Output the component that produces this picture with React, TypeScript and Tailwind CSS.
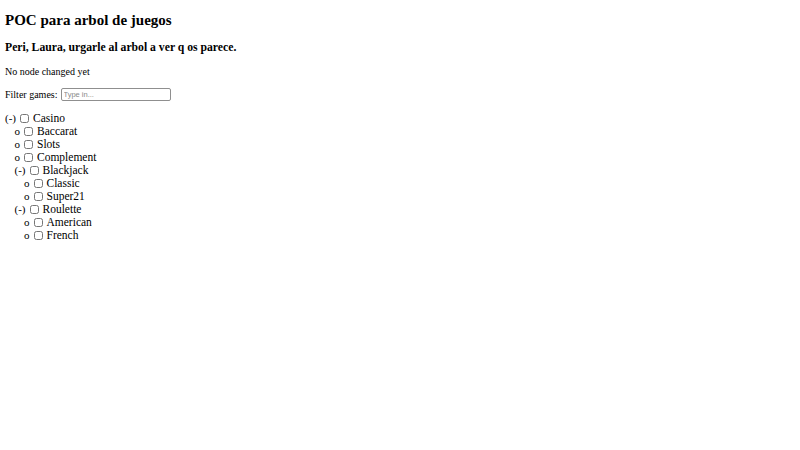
import React from "react";

type Node = { label: string; children?: Node[] };

const tree: Node = {
  label: "Casino",
  children: [
    { label: "Baccarat" },
    { label: "Slots" },
    { label: "Complement" },
    { label: "Blackjack", children: [{ label: "Classic" }, { label: "Super21" }] },
    { label: "Roulette", children: [{ label: "American" }, { label: "French" }] },
  ],
};

function Row({ node, depth }: { node: Node; depth: number }) {
  const hasKids = !!node.children;
  return (
    <>
      <div className="flex items-center h-[13px]" style={{ paddingLeft: depth * 9.5 }}>
        <span className="text-[11px] mr-[4px]">{hasKids ? "(-)" : "o"}</span>
        <input type="checkbox" className="w-[9px] h-[9px] m-0 mr-[4px] -mt-[1px]" />
        <span className="text-[11.5px]">{node.label}</span>
      </div>
      {node.children?.map((c) => (
        <Row key={c.label} node={c} depth={depth + 1} />
      ))}
    </>
  );
}

export default function App() {
  return (
    <div className="px-[5px] text-black bg-white min-h-[450px]" style={{ fontFamily: '"Liberation Serif", serif' }}>
      <h1 className="text-[15px] font-bold pt-[11px] leading-[18px]">POC para arbol de juegos</h1>
      <h2 className="text-[11.7px] font-bold mt-[12px] leading-[14px]">Peri, Laura, urgarle al arbol a ver q os parece.</h2>
      <p className="text-[10px] mt-[11px] leading-[12px]">No node changed yet</p>
      <div className="mt-[10px] flex items-center h-[13px] text-[10px] leading-[12px]">
        <span>Filter games:</span>
        <input
          type="text"
          placeholder="Type in..."
          className="ml-[3px] w-[110px] h-[13px] border border-[#8f8f8f] rounded-[2px] px-[2px] text-[7.5px] placeholder:text-[#8a8a8a]"
          style={{ fontFamily: '"Liberation Sans", sans-serif' }}
        />
      </div>
      <div className="mt-[11px]">
        <Row node={tree} depth={0} />
      </div>
    </div>
  );
}
